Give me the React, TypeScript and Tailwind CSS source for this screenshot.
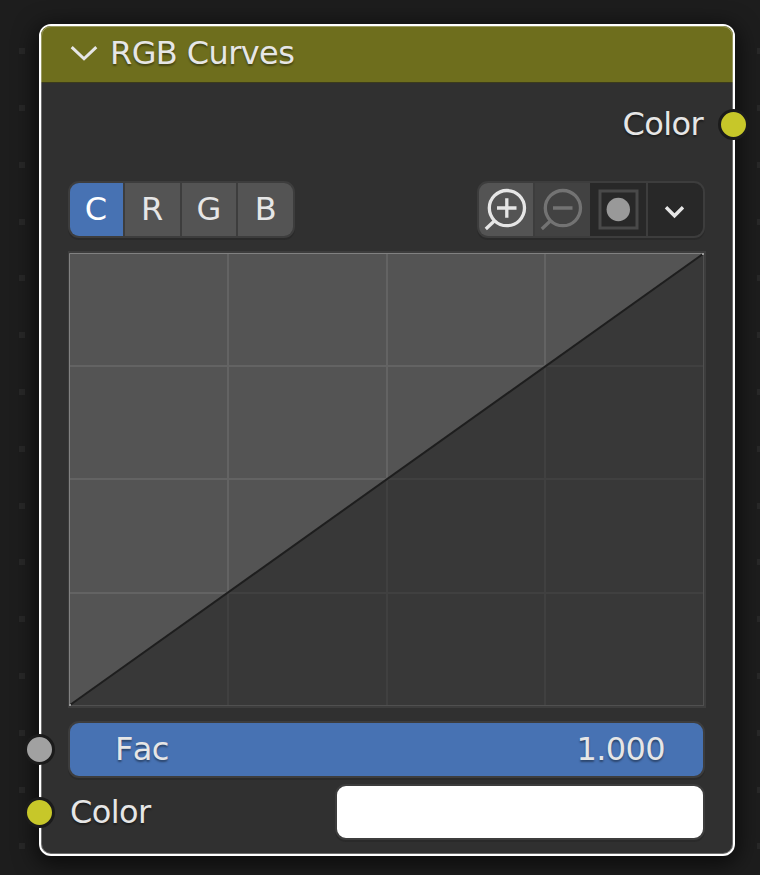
import React from 'react';
import clsx from 'clsx';

const channels = ['C', 'R', 'G', 'B'] as const;

const gridRows = [48, 105, 162, 219, 275, 332, 389, 446, 503, 559, 616, 673, 730, 787, 843];
const gridColumns = [19, 757];

function CanvasGrid() {
  return (
    <svg className="absolute inset-0" width="760" height="875" shapeRendering="crispEdges">
      {gridColumns.map((x) =>
        gridRows.map((y) => <rect key={`${x}-${y}`} x={x} y={y} width="6" height="6" fill="#282828" />)
      )}
    </svg>
  );
}

function Socket({ className }: { className: string }) {
  return (
    <span className={clsx('absolute h-[31px] w-[31px] rounded-full border-[3px] border-[#1b1b1b]', className)} />
  );
}

function ZoomIcon({ plus = false }: { plus?: boolean }) {
  return (
    <svg width="54" height="53" viewBox="0 0 54 53" fill="none" stroke="currentColor" strokeWidth="3.3">
      <circle cx="27.9" cy="25.1" r="17.6" />
      <path d="M15.8 37.5L6.8 46" />
      <path d="M18 25H37.5" />
      {plus && <path d="M27.8 15.2V34.8" />}
    </svg>
  );
}

function ChannelTabs() {
  return (
    <div className="flex h-[57px] w-[227px] gap-[2px] overflow-hidden rounded-[11px] border-2 border-[#3d3d3d] bg-[#3d3d3d] shadow-[0_2px_0_#2a2a2a]">
      {channels.map((channel) => (
        <button
          key={channel}
          className={clsx(
            'flex h-[53px] items-center justify-center pb-px tracking-normal',
            channel === 'C' ? 'w-[53px] bg-[#4772b3] pr-px text-white' : 'w-[55px] bg-[#545454]'
          )}
        >
          {channel}
        </button>
      ))}
    </div>
  );
}

function CurveTools() {
  return (
    <div className="flex h-[57px] w-[228px] overflow-hidden rounded-[11px] border-2 border-[#3d3d3d] bg-[#3d3d3d] shadow-[0_2px_0_#2a2a2a]">
      <button className="h-[53px] w-[54px] bg-[#545454]">
        <ZoomIcon plus />
      </button>
      <button className="h-[53px] w-[57px] border-l-2 border-[#3d3d3d] bg-[#424242] text-[#737373]">
        <ZoomIcon />
      </button>
      <button className="h-[53px] w-[56px] bg-[#282828]">
        <svg width="56" height="53" viewBox="0 0 56 53" fill="none">
          <rect x="10" y="8" width="37" height="37" stroke="#494949" strokeWidth="3" />
          <circle cx="28.3" cy="26.5" r="11.7" fill="#999999" />
        </svg>
      </button>
      <button className="h-[53px] w-[57px] border-l-2 border-[#3d3d3d] bg-[#282828]">
        <svg width="55" height="53" viewBox="0 0 55 53" fill="none" stroke="currentColor" strokeWidth="3.4">
          <path d="M18 24.3L26.5 32.8L35 24.3" />
        </svg>
      </button>
    </div>
  );
}

function CurveEditor() {
  return (
    <svg width="638" height="457" viewBox="68 251 638 457" fill="none" className="block">
      <rect x="68" y="251" width="638" height="457" fill="#3d3d3d" />
      <rect x="69" y="253" width="635" height="453" fill="#383838" />
      <path d="M228 253V706M387 253V706M545 253V706M69 366H704M69 479H704M69 593H704" stroke="#404040" strokeWidth="2" />
      <path d="M69 253H704L69 706Z" fill="#545454" />
      <path d="M228 253V593M387 253V479M545 253V366M69 366H545M69 479H387M69 593H228" stroke="#636363" strokeWidth="2" />
      <path d="M69 705.5H704M703.5 253V706" stroke="#505050" />
      <path d="M69.5 706V253.5H704" stroke="#818181" />
      <path d="M70 705L703 254" stroke="#1e1e1e" strokeWidth="2" />
      <path d="M69 705h2M702 254h2" stroke="#999999" strokeWidth="2" />
    </svg>
  );
}

export default function App() {
  return (
    <main className="relative h-[875px] w-[760px] overflow-hidden bg-[#1d1d1d] pt-6 pl-[39px] font-['DejaVu_Sans',sans-serif] text-[32px] leading-none tracking-[-0.6px] text-[#e6e6e6] [font-kerning:none]">
      <CanvasGrid />

      <section className="relative h-[832px] w-[696px] rounded-[12px] border-2 border-white bg-[#303030] shadow-[0_5px_22px_3px_rgba(0,0,0,0.65)] outline-1 -outline-offset-3 outline-white/30">
        {/* Header */}
        <header className="flex h-[57px] items-center rounded-t-[9px] border-b border-[#3b3b1c] bg-[#6e6e1d] pl-[29px] text-shadow-[0_2px_2px_rgba(0,0,0,0.4)]">
          <svg width="28" height="20" viewBox="0 0 28 20" fill="none" stroke="currentColor" strokeWidth="3">
            <path d="M1.7 3.2L14 14.8L26.3 3.2" />
          </svg>
          <h1 className="ml-[12px] pb-[2px]">RGB Curves</h1>
        </header>

        <div className="flex flex-col pr-[28px] pl-[27px] text-shadow-[0_2px_2px_rgba(0,0,0,0.4)]">
          {/* Output */}
          <div className="flex h-[83px] items-center justify-end pr-[2px] pb-[2px]">Color</div>

          <div className="mt-[15px] flex justify-between">
            <ChannelTabs />
            <CurveTools />
          </div>

          <div className="mt-[13px]">
            <CurveEditor />
          </div>

          {/* Inputs */}
          <div className="mt-[13px] flex h-[57px] w-[637px] items-center justify-between rounded-[11px] border-2 border-[#3d3d3d] bg-[#4772b3] pr-[38px] pb-px pl-[45px] shadow-[0_2px_0_#2a2a2a]">
            <span>Fac</span>
            <span>1.000</span>
          </div>
          <div className="mt-[6px] flex w-[637px] items-center justify-between">
            <span className="pl-[2px]">Color</span>
            <span className="h-[56px] w-[370px] rounded-[11px] border-2 border-[#3d3d3d] bg-white shadow-[0_2px_0_#2a2a2a]" />
          </div>
        </div>

        <Socket className="top-[83px] right-[-16px] bg-[#c7c729]" />
        <Socket className="top-[708px] left-[-17px] bg-[#a1a1a1]" />
        <Socket className="top-[771px] left-[-17px] bg-[#c7c729]" />
      </section>
    </main>
  );
}
